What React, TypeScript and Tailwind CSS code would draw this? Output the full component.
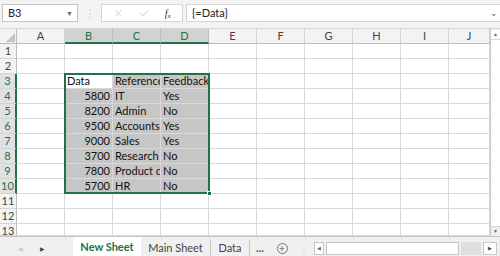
import { X, Check } from "lucide-react";

const cols = ["A", "B", "C", "D", "E", "F", "G", "H", "I", "J"];
const widths = ["w-[48px]", "w-[48px]", "w-[48px]", "w-[48px]", "w-[48px]", "w-[48px]", "w-[48px]", "w-[48px]", "w-[48px]", "w-[41px]"];

type Cell = { v: string; right?: boolean };
const data: Record<number, Cell[]> = {
  3: [{ v: "Data" }, { v: "Reference" }, { v: "Feedback" }],
  4: [{ v: "5800", right: true }, { v: "IT" }, { v: "Yes" }],
  5: [{ v: "8200", right: true }, { v: "Admin" }, { v: "No" }],
  6: [{ v: "9500", right: true }, { v: "Accounts" }, { v: "Yes" }],
  7: [{ v: "9000", right: true }, { v: "Sales" }, { v: "Yes" }],
  8: [{ v: "3700", right: true }, { v: "Research and Development" }, { v: "No" }],
  9: [{ v: "7800", right: true }, { v: "Product development" }, { v: "No" }],
  10: [{ v: "5700", right: true }, { v: "HR" }, { v: "No" }],
};

function Row({ n, last }: { n: number; last?: boolean }) {
  const selRow = n >= 3 && n <= 10;
  return (
    <div className={`flex ${last ? "h-[12px]" : "h-[15px]"}`}>
      <div
        className={`w-[17px] shrink-0 border-b border-[#d4d4d4] text-[11px] leading-[14px] text-center ${
          selRow ? "bg-[#e1e1e1] text-[#217346] border-r-2 border-r-[#217346]" : "bg-[#f3f3f3] text-[#444] border-r border-r-[#bcbcbc]"
        }`}
      >
        {n}
      </div>
      {cols.map((c, i) => {
        const inSel = selRow && i >= 1 && i <= 3;
        const active = n === 3 && i === 1;
        const cell = inSel ? data[n][i - 1] : undefined;
        return (
          <div
            key={c}
            className={`${widths[i]} shrink-0 border-r border-b border-[#d9d9d9] overflow-hidden whitespace-nowrap text-[11px] leading-[14px] text-[#111] px-[2px] ${
              inSel && !active ? "bg-[#c6c6c6]" : "bg-white"
            } ${cell?.right ? "text-right" : "text-left"}`}
          >
            {cell?.v}
          </div>
        );
      })}
    </div>
  );
}

export default function App() {
  return (
    <div className="w-[500px] h-[256px] overflow-hidden bg-[#f3f3f3] flex flex-col font-['Lato',sans-serif] select-none">
      {/* Formula bar */}
      <div className="h-[29px] shrink-0 flex items-start pt-[4px] pl-[2px] gap-0 border-b border-[#d4d4d4]">
        <div className="w-[76px] h-[18px] bg-white border border-[#c6c6c6] flex items-center justify-between pl-[5px] pr-[4px] text-[11px] text-[#222]">
          <span>B3</span>
          <span className="text-[7px] text-[#666]">▼</span>
        </div>
        <div className="w-[23px] h-[18px] flex items-center justify-center text-[#c0c0c0] text-[10px]">⋮</div>
        <div className="w-[82px] h-[18px] bg-white border border-[#d4d4d4] flex items-center justify-around px-[4px]">
          <X className="w-[11px] h-[11px] text-[#b8b8b8]" strokeWidth={1.5} />
          <Check className="w-[11px] h-[11px] text-[#b8b8b8]" strokeWidth={1.5} />
          <span className="text-[10px] italic font-['Liberation_Serif',serif] text-[#333]">
            f<sub className="text-[7px]">x</sub>
          </span>
        </div>
        <div className="ml-[3px] flex-1 h-[18px] bg-white border border-[#d4d4d4] border-r-0 flex items-center justify-between pl-[5px] pr-[2px] text-[11px] text-[#222]">
          <span>{"{=Data}"}</span>
          <span className="text-[9px] text-[#555]">⌄</span>
        </div>
      </div>

      {/* Sheet */}
      <div className="flex h-[207px] shrink-0 bg-white">
        <div className="w-[490px] shrink-0 relative">
          <div className="flex h-[15px]">
            <div className="w-[17px] shrink-0 bg-[#f3f3f3] border-r border-b border-[#bcbcbc] relative">
              <svg className="absolute right-[1px] bottom-[1px]" width="9" height="9" viewBox="0 0 9 9">
                <path d="M9 0 L9 9 L0 9 Z" fill="#c4c4c4" />
              </svg>
            </div>
            {cols.map((c, i) => {
              const sel = i >= 1 && i <= 3;
              return (
                <div
                  key={c}
                  className={`${widths[i]} shrink-0 border-r text-[11px] leading-[13px] text-center ${
                    sel
                      ? "bg-[#d2d2d2] text-[#217346] border-r-[#bcbcbc] border-b-2 border-b-[#217346]"
                      : "bg-[#f3f3f3] text-[#444] border-r-[#d4d4d4] border-b border-b-[#bcbcbc]"
                  }`}
                >
                  {c}
                </div>
              );
            })}
          </div>
          {Array.from({ length: 13 }, (_, k) => (
            <Row key={k} n={k + 1} last={k === 12} />
          ))}
          {/* selection outline */}
          <div className="absolute left-[64px] top-[44px] w-[146px] h-[121px] border-2 border-[#217346] pointer-events-none" />
          <div className="absolute left-[207px] top-[162px] w-[5px] h-[5px] bg-[#217346] border border-white" />
        </div>
        {/* vertical scrollbar */}
        <div className="w-[10px] shrink-0 bg-[#f0f0f0] border-l border-[#c6c6c6] flex flex-col pt-[1px]">
          <div className="h-[10px] bg-white border-b border-[#d4d4d4] flex items-center justify-center text-[5px] text-[#666]">▲</div>
          <div className="flex-1 bg-white" />
          <div className="h-[10px] bg-[#f0f0f0] border-t border-[#d4d4d4] flex items-center justify-center text-[5px] text-[#666]">▼</div>
        </div>
      </div>

      {/* Sheet tabs */}
      <div className="flex-1 flex items-stretch border-t border-[#c6c6c6] bg-[#f0f0f0] text-[11px]">
        <div className="w-[73px] shrink-0 flex items-center pl-[18px] gap-[17px] text-[6px]">
          <span className="text-[#c8c8c8]">◀</span>
          <span className="text-[#444]">▶</span>
        </div>
        <div className="w-[68px] shrink-0 bg-white border-b-2 border-[#217346] flex items-center justify-center font-bold text-[#217346]">
          New Sheet
        </div>
        <div className="w-[70px] shrink-0 flex items-center justify-center text-[#444] border-r border-[#c6c6c6] my-[3px]">Main Sheet</div>
        <div className="w-[39px] shrink-0 flex items-center justify-center text-[#444] border-r border-[#c6c6c6] my-[3px]">Data</div>
        <div className="w-[20px] shrink-0 flex items-center justify-center text-[#217346] font-bold">...</div>
        <div className="w-[24px] shrink-0 flex items-center justify-center">
          <div className="w-[11px] h-[11px] rounded-full border border-[#777] flex items-center justify-center text-[10px] leading-none text-[#555]">+</div>
        </div>
        <div className="w-[20px] shrink-0 flex items-center justify-center text-[#c0c0c0] text-[10px]">⋮</div>
        <div className="flex-1 flex items-center gap-[2px] pr-[3px]">
          <div className="w-[10px] h-[13px] bg-white border border-[#c6c6c6] flex items-center justify-center text-[5px] text-[#666]">◀</div>
          <div className="w-[133px] h-[13px] bg-white border border-[#c6c6c6]" />
          <div className="flex-1 h-[13px] bg-[#dedede]" />
          <div className="w-[14px] h-[13px] bg-white border border-[#c6c6c6] flex items-center justify-center text-[5px] text-[#444]">▶</div>
        </div>
      </div>
    </div>
  );
}
